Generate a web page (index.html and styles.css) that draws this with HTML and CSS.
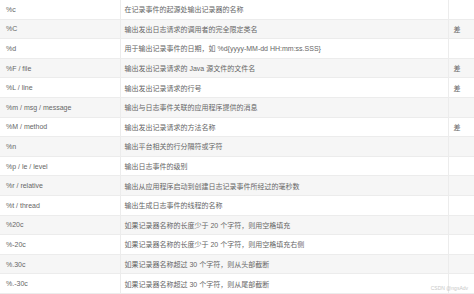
FILE: index.html
```html
<!DOCTYPE html>
<html lang="zh">
<head>
<meta charset="utf-8">
<link rel="stylesheet" href="styles.css">
</head>
<body>
<div class="wrap">
<table class="fmt">
<colgroup><col class="c1"><col class="c2"><col class="c3"></colgroup>
<tbody>
<tr><td>%c</td><td>在记录事件的起源处输出记录器的名称</td><td></td></tr>
<tr><td>%C</td><td>输出发出日志请求的调用者的完全限定类名</td><td>差</td></tr>
<tr><td>%d</td><td>用于输出记录事件的日期，如 %d{yyyy-MM-dd HH:mm:ss.SSS}</td><td></td></tr>
<tr><td>%F / file</td><td>输出发出记录请求的 Java 源文件的文件名</td><td>差</td></tr>
<tr><td>%L / line</td><td>输出发出记录请求的行号</td><td>差</td></tr>
<tr><td>%m / msg / message</td><td>输出与日志事件关联的应用程序提供的消息</td><td></td></tr>
<tr><td>%M / method</td><td>输出发出记录请求的方法名称</td><td>差</td></tr>
<tr><td>%n</td><td>输出平台相关的行分隔符或字符</td><td></td></tr>
<tr><td>%p / le / level</td><td>输出日志事件的级别</td><td></td></tr>
<tr><td>%r / relative</td><td>输出从应用程序启动到创建日志记录事件所经过的毫秒数</td><td></td></tr>
<tr><td>%t / thread</td><td>输出生成日志事件的线程的名称</td><td></td></tr>
<tr><td>%20c</td><td>如果记录器名称的长度少于 20 个字符，则用空格填充</td><td></td></tr>
<tr><td>%-20c</td><td>如果记录器名称的长度少于 20 个字符，则用空格填充右侧</td><td></td></tr>
<tr><td>%.30c</td><td>如果记录器名称超过 30 个字符，则从头部截断</td><td></td></tr>
<tr><td>%.-30c</td><td>如果记录器名称超过 30 个字符，则从尾部截断</td><td></td></tr>
</tbody>
</table>
<span class="mark">CSDN @ngsAdv</span>
</div>
</body>
</html>
```
FILE: styles.css
```css
html, body {
  margin: 0;
  padding: 0;
  background: #ffffff;
}
.wrap {
  position: relative;
  width: 474px;
  height: 294px;
  overflow: hidden;
}
.fmt {
  width: 474px;
  border-collapse: collapse;
  table-layout: fixed;
  font-family: "Liberation Sans", "Noto Sans CJK SC", sans-serif;
  font-size: 7px;
  color: #666666;
}
.c1 { width: 120px; }
.c2 { width: 328px; }
.c3 { width: 26px; }
.fmt td {
  height: 18.6px;
  padding: 0 0 0 4px;
  border-bottom: 1px solid #ececec;
  border-right: 1px solid #ececec;
  white-space: nowrap;
  overflow: hidden;
  vertical-align: middle;
}
.fmt td:first-child { padding-left: 6px; }
.fmt td:last-child { border-right: none; padding-left: 5px; }
.fmt tr:nth-child(even) td { background: #f6f6f6; }
.mark {
  position: absolute;
  right: 6px;
  bottom: 3px;
  font-family: "Liberation Sans", sans-serif;
  font-size: 5px;
  color: #c8c8c8;
}
```
